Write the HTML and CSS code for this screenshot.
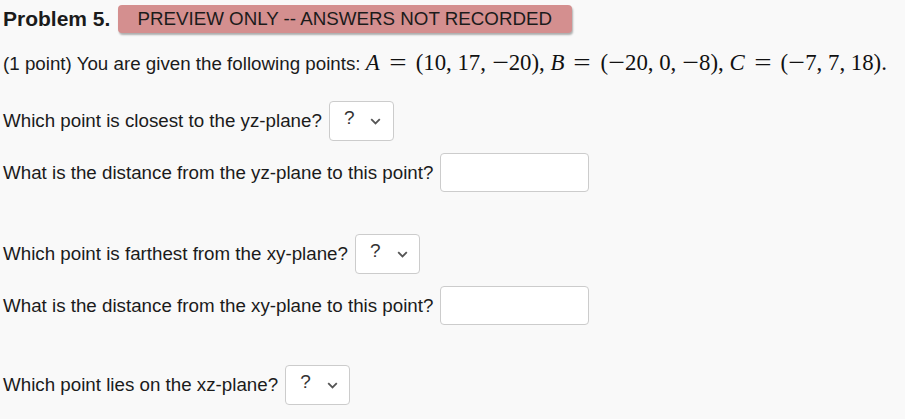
FILE: index.html
```html
<!DOCTYPE html>
<html>
<head>
<meta charset="utf-8">
<link rel="stylesheet" href="styles.css">
</head>
<body>
<div class="page">
  <div class="header">
    <span class="title">Problem 5.</span>
    <span class="badge">PREVIEW ONLY -- ANSWERS NOT RECORDED</span>
  </div>
  <p class="intro">(1 point) You are given the following points: <span class="math"><i>A</i><span class="eq">=</span>(10, 17, <span class="mi">−</span>20), <i>B</i><span class="eq">=</span>(<span class="mi">−</span>20, 0, <span class="mi">−</span>8), <i>C</i><span class="eq">=</span>(<span class="mi">−</span>7, 7, 18).</span></p>

  <div class="row r1">
    <span>Which point is closest to the yz-plane?</span>
    <div class="select"><span class="q">?</span><svg width="11" height="7" viewBox="0 0 11 7"><path d="M1.2 1.2 L5.5 5.5 L9.8 1.2" fill="none" stroke="#555" stroke-width="1.8"/></svg></div>
  </div>
  <div class="row r2">
    <span>What is the distance from the yz-plane to this point?</span>
    <div class="input"></div>
  </div>
  <div class="row r3">
    <span>Which point is farthest from the xy-plane?</span>
    <div class="select"><span class="q">?</span><svg width="11" height="7" viewBox="0 0 11 7"><path d="M1.2 1.2 L5.5 5.5 L9.8 1.2" fill="none" stroke="#555" stroke-width="1.8"/></svg></div>
  </div>
  <div class="row r2">
    <span>What is the distance from the xy-plane to this point?</span>
    <div class="input"></div>
  </div>
  <div class="row r5">
    <span>Which point lies on the xz-plane?</span>
    <div class="select"><span class="q">?</span><svg width="11" height="7" viewBox="0 0 11 7"><path d="M1.2 1.2 L5.5 5.5 L9.8 1.2" fill="none" stroke="#555" stroke-width="1.8"/></svg></div>
  </div>
</div>
</body>
</html>
```

FILE: styles.css
```css
html, body {
  margin: 0;
  padding: 0;
  background: #f9f9f9;
}
.page {
  padding: 5px 3px 0 3px;
  font-family: "Liberation Sans", Arial, sans-serif;
  font-size: 18.75px;
  color: #1b1b1b;
}
.header {
  display: flex;
  align-items: center;
  height: 28px;
}
.title {
  font-weight: bold;
  font-size: 21px;
  margin-right: 8px;
}
.badge {
  display: flex;
  align-items: center;
  height: 28px;
  padding: 0 20px 0 19px;
  background: #d48f8f;
  border-radius: 4px;
  box-shadow: 1px 2px 2px rgba(0,0,0,0.3);
  font-size: 18.75px;
  color: #1b1b1b;
}
.intro {
  margin: 14px 0 0 0;
  height: 32px;
  line-height: 32px;
}
.math {
  font-family: "Liberation Serif", "Times New Roman", serif;
  font-size: 22.8px;
  color: #111;
}
.eq {
  display: inline-block;
  width: 36px;
  text-align: center;
  transform: scaleX(1.35);
}
.mi {
  display: inline-block;
  width: 17px;
  text-align: center;
  transform: scaleX(1.3);
}
.row {
  display: flex;
  align-items: center;
  gap: 7px;
}
.r1 { margin-top: 22px; }
.r2 { margin-top: 12px; }
.r3 { margin-top: 42px; }
.r5 { margin-top: 40px; }
.select {
  box-sizing: border-box;
  width: 65px;
  height: 40px;
  border: 1px solid #cccccc;
  border-radius: 4px;
  background: #ffffff;
  display: flex;
  align-items: center;
  padding: 0 0 0 14px;
  gap: 16px;
}
.select .q {
  font-size: 19px;
  color: #333;
  margin-top: -6px;
}
.input {
  box-sizing: border-box;
  width: 149px;
  height: 39px;
  border: 1px solid #cccccc;
  border-radius: 4px;
  background: #ffffff;
}
```
